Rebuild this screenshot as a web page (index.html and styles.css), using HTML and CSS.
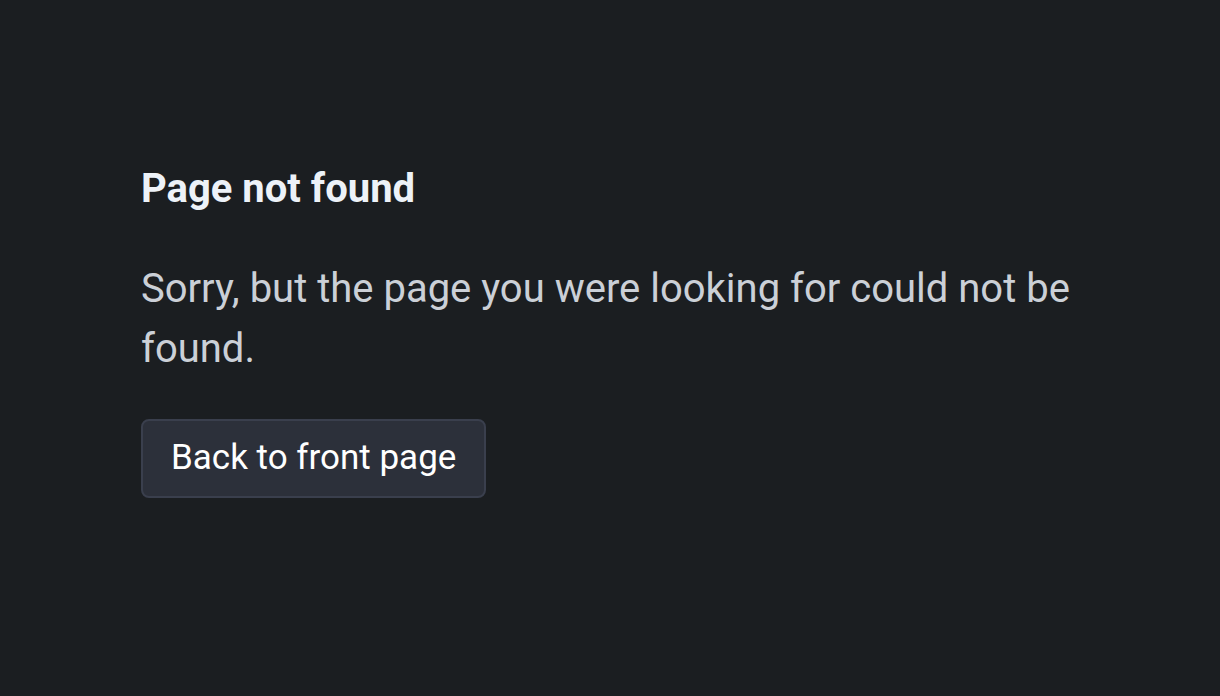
FILE: index.html
```html
<!DOCTYPE html>
<html lang="en">
<head>
    <meta charset="UTF-8">
    <meta name="viewport" content="width=device-width, initial-scale=1.0">
    <title>Page not found</title>
    <link rel="stylesheet" href="styles.css">
</head>
<body>

<div class="not-found">
    <h1 class="title">Page not found</h1>
    <p class="text">Sorry, but the page you were looking for could not be found.</p>
    <a class="back-button" href="#">Back to front page</a>
</div>

</body>
</html>
```

FILE: styles.css
```css
body {
    margin: 0;
    padding: 0;
    height: 100vh;
    background-color: #1b1e21;
    font-family: Roboto, "Noto Sans", sans-serif;
    overflow: hidden;
}

.not-found {
    padding: 165px 142px 0 141px;
    max-width: 940px;
}

.title {
    margin: 0;
    font-size: 40px;
    font-weight: 700;
    line-height: 48px;
    color: #edf2f8;
}

.text {
    margin: 46px 0 0 0;
    font-size: 40px;
    line-height: 60px;
    color: #cbd0d7;
}

.back-button {
    display: inline-block;
    margin-top: 40px;
    padding: 13px 28px 14px 28px;
    font-size: 35px;
    line-height: 48px;
    color: #ffffff;
    text-decoration: none;
    background-color: #2c303a;
    border: 2px solid #3a3f4d;
    border-radius: 8px;
}
```
